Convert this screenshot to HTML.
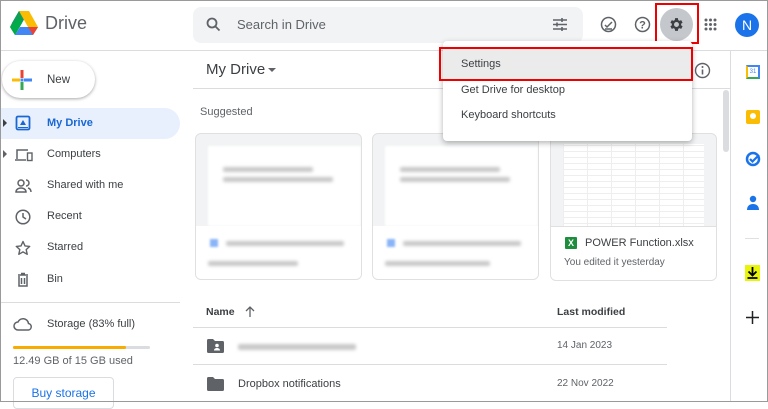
<!DOCTYPE html>
<html><head><style>
*{box-sizing:border-box;margin:0;padding:0}
body{width:768px;height:402px;overflow:hidden;font-family:"Liberation Sans",sans-serif;color:#3c4043;background:#fff;position:relative;font-size:11px}
.frame{position:absolute;inset:0;border:1px solid #9a9a9a;z-index:50;pointer-events:none}
.a{position:absolute}
.blur{filter:blur(1.5px);background:#c8c8c8;border-radius:2px;position:absolute;height:5px}
.nav{position:absolute;left:47px;font-size:11px;color:#3c4043}
.ic{position:absolute;left:15px}
</style></head><body>
<div class="frame"></div>
<!-- header -->
<svg class="a" style="left:10px;top:11px" width="28" height="25" viewBox="0 0 28 25">
<path d="M9 0h10l-7 12H2z" fill="#0f9d58"/><path d="M9 0l-7 12 -2 4 5 8 7-12z" fill="#0f9d58"/>
<path d="M9 0h10l9 16h-10z" fill="#fbbc04"/>
<path d="M5 24l5-8h18l-5 8z" fill="#4285f4"/>
<path d="M0 16l5 8 7-12-3-5z" fill="#00ac47"/>
<path d="M28 16h-10l5 8z" fill="#ea4335"/>
</svg>
<div class="a" style="left:45px;top:13px;font-size:18px;color:#5f6368">Drive</div>
<div class="a" style="left:193px;top:7px;width:390px;height:36px;background:#f1f3f4;border-radius:8px"></div>
<svg class="a" style="left:206px;top:17px" width="15" height="15" viewBox="0 0 15 15"><circle cx="6" cy="6" r="4.5" fill="none" stroke="#5f6368" stroke-width="1.8"/><path d="M9.5 9.5l4 4" stroke="#5f6368" stroke-width="1.8"/></svg>
<div class="a" style="left:237px;top:17px;font-size:13px;color:#5f6368">Search in Drive</div>
<svg class="a" style="left:553px;top:18px" width="14" height="13" viewBox="0 0 14 13"><path d="M0 2h14M0 6.5h14M0 11h14" stroke="#5f6368" stroke-width="1.4"/><path d="M9 0v4M4 4.5v4M9 9v4" stroke="#5f6368" stroke-width="1.6"/></svg>
<svg class="a" style="left:600px;top:16px" width="17" height="17" viewBox="0 0 17 17"><circle cx="8.5" cy="8.5" r="7" fill="none" stroke="#5f6368" stroke-width="1.5"/><path d="M5 9l2 2 5-5M5 13h7" stroke="#5f6368" stroke-width="1.5" fill="none"/></svg>
<svg class="a" style="left:634px;top:16px" width="17" height="17" viewBox="0 0 17 17"><circle cx="8.5" cy="8.5" r="7" fill="none" stroke="#5f6368" stroke-width="1.5"/><text x="8.5" y="12.5" font-size="11" text-anchor="middle" fill="#5f6368" font-family="Liberation Sans" font-weight="bold">?</text></svg>
<div class="a" style="left:660px;top:8px;width:33px;height:33px;border-radius:50%;background:#c4c7cc"></div>
<svg class="a" style="left:668px;top:16px" width="17" height="17" viewBox="0 0 24 24"><path fill="#3c4043" d="M19.4 13a7.5 7.5 0 000-2l2.1-1.6-2-3.5-2.5 1a7 7 0 00-1.7-1L14.9 3h-4l-.4 2.9a7 7 0 00-1.7 1l-2.5-1-2 3.5L6.4 11a7.5 7.5 0 000 2l-2.1 1.6 2 3.5 2.5-1c.5.4 1.1.7 1.7 1l.4 2.9h4l.4-2.9c.6-.3 1.2-.6 1.7-1l2.5 1 2-3.5zM12.9 15.5a3.5 3.5 0 110-7 3.5 3.5 0 010 7z" transform="translate(-0.9 0)"/></svg>
<div class="a" style="left:655px;top:3px;width:44px;height:41px;border:2px solid #e00"></div>
<svg class="a" style="left:704px;top:18px" width="13" height="13" viewBox="0 0 13 13" fill="#5f6368"><circle cx="2" cy="2" r="1.5"/><circle cx="6.5" cy="2" r="1.5"/><circle cx="11" cy="2" r="1.5"/><circle cx="2" cy="6.5" r="1.5"/><circle cx="6.5" cy="6.5" r="1.5"/><circle cx="11" cy="6.5" r="1.5"/><circle cx="2" cy="11" r="1.5"/><circle cx="6.5" cy="11" r="1.5"/><circle cx="11" cy="11" r="1.5"/></svg>
<div class="a" style="left:735px;top:13px;width:24px;height:24px;border-radius:50%;background:#1a73e8;color:#fff;font-size:14px;text-align:center;line-height:24px">N</div>
<div class="a" style="left:0;top:50px;width:768px;height:1px;background:#dadce0"></div>
<!-- sidebar -->
<div class="a" style="left:2px;top:61px;width:93px;height:37px;border-radius:19px;box-shadow:0 1px 3px rgba(0,0,0,.35);background:#fff"></div>
<svg class="a" style="left:12px;top:70px" width="20" height="20" viewBox="0 0 20 20"><path d="M10 0v8" stroke="#ea4335" stroke-width="3"/><path d="M10 12v8" stroke="#34a853" stroke-width="3"/><path d="M0 10h8" stroke="#fbbc04" stroke-width="3"/><path d="M12 10h8" stroke="#4285f4" stroke-width="3"/><rect x="8.5" y="8.5" width="3" height="3" fill="#4285f4"/></svg>
<div class="a" style="left:47px;top:74px;font-size:11.5px;color:#3c4043">New</div>
<div class="a" style="left:0;top:108px;width:180px;height:31px;background:#e8f0fe;border-radius:0 16px 16px 0"></div>
<div class="a" style="left:3px;top:119px;border-left:4px solid #3c4043;border-top:4px solid transparent;border-bottom:4px solid transparent"></div>
<div class="a" style="left:3px;top:150px;border-left:4px solid #5f6368;border-top:4px solid transparent;border-bottom:4px solid transparent"></div>
<svg class="ic" style="top:115px" width="16" height="16" viewBox="0 0 16 16"><rect x="1.5" y="1.5" width="13" height="13" rx="1.5" fill="none" stroke="#1967d2" stroke-width="1.8"/><path d="M5 10l3-5 3 5z" fill="#1967d2"/><path d="M3 12.5h10" stroke="#1967d2"/></svg>
<div class="nav" style="top:117px;color:#1967d2;font-weight:bold">My Drive</div>
<svg class="ic" style="top:148px" width="18" height="14" viewBox="0 0 18 14"><path d="M2 11V2h11" fill="none" stroke="#5f6368" stroke-width="1.5"/><path d="M0 12h11" stroke="#5f6368" stroke-width="1.5"/><rect x="12.5" y="5" width="4.5" height="7.5" fill="none" stroke="#5f6368" stroke-width="1.4"/></svg>
<div class="nav" style="top:148px">Computers</div>
<svg class="ic" style="top:179px" width="17" height="14" viewBox="0 0 17 14"><circle cx="6" cy="4" r="3" fill="none" stroke="#5f6368" stroke-width="1.5"/><path d="M1 13c0-3 3-4 5-4s5 1 5 4z" fill="none" stroke="#5f6368" stroke-width="1.5"/><path d="M11 1a3 3 0 010 6M13 9c2 .5 3 2 3 4" fill="none" stroke="#5f6368" stroke-width="1.5"/></svg>
<div class="nav" style="top:179px">Shared with me</div>
<svg class="ic" style="top:209px" width="16" height="16" viewBox="0 0 16 16"><circle cx="8" cy="8" r="6.8" fill="none" stroke="#5f6368" stroke-width="1.5"/><path d="M8 4v4l3 2" fill="none" stroke="#5f6368" stroke-width="1.5"/></svg>
<div class="nav" style="top:210px">Recent</div>
<svg class="ic" style="top:240px" width="16" height="16" viewBox="0 0 16 16"><path d="M8 1.5l2 4.4 4.7.5-3.5 3.2 1 4.7L8 11.9l-4.2 2.4 1-4.7L1.3 6.4 6 5.9z" fill="none" stroke="#5f6368" stroke-width="1.4" stroke-linejoin="round"/></svg>
<div class="nav" style="top:241px">Starred</div>
<svg class="ic" style="top:272px" width="16" height="16" viewBox="0 0 16 16"><path d="M3 3h10M6 1.5h4M4 4v10h8V4M6.5 6v6M9.5 6v6" fill="none" stroke="#5f6368" stroke-width="1.5"/></svg>
<div class="nav" style="top:273px">Bin</div>
<div class="a" style="left:0;top:302px;width:180px;height:1px;background:#dadce0"></div>
<svg class="a" style="left:13px;top:317px" width="20" height="14" viewBox="0 0 20 14"><path d="M5 13a4 4 0 010-8 5.5 5.5 0 0110.5 1.5A3.3 3.3 0 0115.5 13z" fill="none" stroke="#5f6368" stroke-width="1.5"/></svg>
<div class="nav" style="top:318px">Storage (83% full)</div>
<div class="a" style="left:13px;top:346px;width:137px;height:3px;background:#dadce0;border-radius:2px"></div>
<div class="a" style="left:13px;top:346px;width:113px;height:3px;background:#f9ab00;border-radius:2px"></div>
<div class="a" style="left:13px;top:355px;font-size:11px;color:#5f6368">12.49 GB of 15 GB used</div>
<div class="a" style="left:13px;top:377px;width:101px;height:32px;border:1px solid #dadce0;border-radius:4px;color:#1a73e8;font-size:12px;text-align:center;padding-top:8px">Buy storage</div>
<!-- main -->
<div class="a" style="left:206px;top:61px;font-size:15px;color:#3c4043">My Drive</div>
<div class="a" style="left:268px;top:68px;border-top:4px solid #5f6368;border-left:4px solid transparent;border-right:4px solid transparent"></div>
<div class="a" style="left:193px;top:88px;width:537px;height:1px;background:#dadce0"></div>
<svg class="a" style="left:694px;top:62px" width="17" height="17" viewBox="0 0 17 17"><circle cx="8.5" cy="8.5" r="7" fill="none" stroke="#5f6368" stroke-width="1.4"/><path d="M8.5 7.5v5" stroke="#5f6368" stroke-width="1.6"/><circle cx="8.5" cy="5" r="1" fill="#5f6368"/></svg>
<div class="a" style="left:200px;top:106px;font-size:11px;color:#5f6368">Suggested</div>
<div class="a" style="left:723px;top:90px;width:6px;height:62px;background:#dadce0;border-radius:3px"></div>
<!-- cards -->
<div class="a" style="left:195px;top:133px;width:167px;height:147px;border:1px solid #e0e0e0;border-radius:6px;background:#f1f3f4;overflow:hidden">
 <div class="a" style="left:12px;top:12px;width:153px;height:80px;background:#fff;filter:blur(1px)"></div>
 <div class="blur" style="left:27px;top:33px;width:90px"></div><div class="blur" style="left:27px;top:43px;width:110px"></div>
 <div class="a" style="left:0;top:92px;width:167px;height:55px;background:#fff"></div>
 <div class="a" style="left:14px;top:105px;width:8px;height:8px;background:#8ab4f8;filter:blur(1px)"></div>
 <div class="blur" style="left:30px;top:107px;width:118px"></div><div class="blur" style="left:12px;top:127px;width:90px"></div>
</div>
<div class="a" style="left:372px;top:133px;width:167px;height:147px;border:1px solid #e0e0e0;border-radius:6px;background:#f1f3f4;overflow:hidden">
 <div class="a" style="left:12px;top:12px;width:153px;height:80px;background:#fff;filter:blur(1px)"></div>
 <div class="blur" style="left:27px;top:33px;width:100px"></div><div class="blur" style="left:27px;top:43px;width:110px"></div>
 <div class="a" style="left:0;top:92px;width:167px;height:55px;background:#fff"></div>
 <div class="a" style="left:14px;top:105px;width:8px;height:8px;background:#8ab4f8;filter:blur(1px)"></div>
 <div class="blur" style="left:30px;top:107px;width:118px"></div><div class="blur" style="left:12px;top:127px;width:105px"></div>
</div>
<div class="a" style="left:550px;top:133px;width:167px;height:148px;border:1px solid #e0e0e0;border-radius:6px;background:#f1f3f4;overflow:hidden">
 <div class="a" style="left:12px;top:10px;width:141px;height:86px;background:#fff;background-image:repeating-linear-gradient(0deg,#eee 0 1px,transparent 1px 6px),repeating-linear-gradient(90deg,#eee 0 1px,transparent 1px 24px)"></div>
 <div class="a" style="left:0;top:92px;width:167px;height:56px;background:#fff;border-top:1px solid #e0e0e0"></div>
 <div class="a" style="left:14px;top:103px;width:12px;height:12px;background:#1e8e3e;color:#fff;font-size:9px;font-weight:bold;text-align:center;line-height:12px;border-radius:1px">X</div>
 <div class="a" style="left:34px;top:103px;font-size:11px;color:#3c4043">POWER Function.xlsx</div>
 <div class="a" style="left:13px;top:123px;font-size:10px;color:#5f6368">You edited it yesterday</div>
</div>
<!-- table -->
<div class="a" style="left:206px;top:306px;font-size:10.5px;font-weight:bold;color:#3c4043">Name</div>
<svg class="a" style="left:245px;top:306px" width="10" height="11" viewBox="0 0 10 11"><path d="M5 11V1M1 5l4-4 4 4" fill="none" stroke="#5f6368" stroke-width="1.3"/></svg>
<div class="a" style="left:557px;top:306px;font-size:10.5px;font-weight:bold;color:#3c4043">Last modified</div>
<div class="a" style="left:193px;top:327px;width:474px;height:1px;background:#dadce0"></div>
<svg class="a" style="left:207px;top:339px" width="17" height="14" viewBox="0 0 17 14"><path d="M0 1.5A1.5 1.5 0 011.5 0H6l2 2h7.5A1.5 1.5 0 0117 3.5v9a1.5 1.5 0 01-1.5 1.5h-14A1.5 1.5 0 010 12.5z" fill="#5f6368"/><circle cx="10" cy="6.5" r="1.8" fill="#fff"/><path d="M7 11.5c0-1.8 1.5-2.5 3-2.5s3 .7 3 2.5z" fill="#fff"/></svg>
<div class="blur" style="left:238px;top:344px;width:118px;height:6px"></div>
<div class="a" style="left:557px;top:340px;font-size:10px;color:#5f6368">14 Jan 2023</div>
<div class="a" style="left:193px;top:364px;width:474px;height:1px;background:#dadce0"></div>
<svg class="a" style="left:207px;top:377px" width="17" height="14" viewBox="0 0 17 14"><path d="M0 1.5A1.5 1.5 0 011.5 0H6l2 2h7.5A1.5 1.5 0 0117 3.5v9a1.5 1.5 0 01-1.5 1.5h-14A1.5 1.5 0 010 12.5z" fill="#5f6368"/></svg>
<div class="a" style="left:238px;top:378px;font-size:11px;color:#3c4043">Dropbox notifications</div>
<div class="a" style="left:557px;top:378px;font-size:10px;color:#5f6368">22 Nov 2022</div>
<!-- right panel -->
<div class="a" style="left:730px;top:51px;width:1px;height:351px;background:#dadce0"></div>
<div class="a" style="left:746px;top:65px;width:14px;height:14px;border:2px solid #4285f4;border-bottom-color:#34a853;border-left-color:#fbbc04;background:#fff;font-size:6px;color:#4285f4;text-align:center;line-height:10px">31</div>
<div class="a" style="left:746px;top:110px;width:14px;height:14px;background:#fbbc04;border-radius:2px"><div class="a" style="left:4px;top:3px;width:6px;height:6px;border-radius:50%;background:#fff"></div></div>
<svg class="a" style="left:745px;top:151px" width="16" height="16" viewBox="0 0 16 16"><circle cx="8" cy="8" r="6" fill="none" stroke="#1a73e8" stroke-width="2.5"/><path d="M5 8l2.5 2.5L14 4" fill="none" stroke="#1a73e8" stroke-width="2.2"/></svg>
<svg class="a" style="left:747px;top:195px" width="12" height="15" viewBox="0 0 12 15"><circle cx="6" cy="4" r="3.2" fill="#1a73e8"/><path d="M0 15c0-4 2.5-6 6-6s6 2 6 6z" fill="#1a73e8"/></svg>
<div class="a" style="left:745px;top:238px;width:14px;height:1px;background:#e0e0e0"></div>
<div class="a" style="left:745px;top:265px;width:15px;height:16px;background:#e8f50a"></div>
<svg class="a" style="left:746px;top:266px" width="13" height="14" viewBox="0 0 13 14"><path d="M6.5 1v8M2.5 5.5l4 4 4-4M1.5 12h10" fill="none" stroke="#000" stroke-width="1.8"/></svg>
<svg class="a" style="left:746px;top:311px" width="13" height="13" viewBox="0 0 13 13"><path d="M6.5 0v13M0 6.5h13" stroke="#202124" stroke-width="1.5"/></svg>
<!-- menu -->
<div class="a" style="left:443px;top:41px;width:249px;height:100px;background:#fff;border-radius:4px;box-shadow:0 2px 6px rgba(0,0,0,.3)"></div>
<div class="a" style="left:443px;top:49px;width:249px;height:30px;background:#ebebeb"></div>
<div class="a" style="left:439px;top:47px;width:254px;height:34px;border:2.5px solid #e00"></div>
<div class="a" style="left:461px;top:58px;font-size:11px;color:#3c4043">Settings</div>
<div class="a" style="left:461px;top:84px;font-size:11px;color:#3c4043">Get Drive for desktop</div>
<div class="a" style="left:461px;top:109px;font-size:11px;color:#3c4043">Keyboard shortcuts</div>
</body></html>
